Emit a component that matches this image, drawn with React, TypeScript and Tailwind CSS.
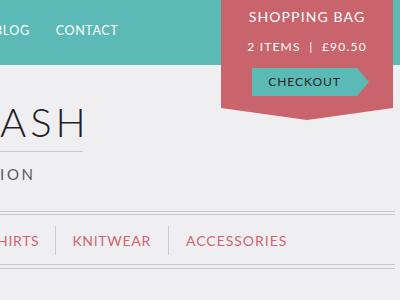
export default function App() {
  return (
    <div className="relative w-[400px] h-[300px] overflow-hidden bg-[#efeff1] font-['Lato','Open_Sans',sans-serif]">
      {/* Top bar */}
      <header className="h-[65px] bg-[#5bbab5] flex items-center">
        <nav className="flex items-center gap-[26px] -ml-[6px] text-white text-[12.5px] tracking-[0.05em] leading-none pb-[2px]">
          <span>BLOG</span>
          <span>CONTACT</span>
        </nav>
      </header>

      {/* Logo */}
      <div className="pt-[37px]">
        <div className="text-[40px] font-light leading-none tracking-[0.1em] text-[#1f1f1f]">ASH</div>
        <div className="mt-[9px] w-[83px] h-px bg-[#c9c9cb]" />
        <div className="mt-[15px] text-[15px] leading-none tracking-[0.18em] text-[#5a5a5c]">ION</div>
      </div>

      {/* Category menu */}
      <div className="mt-[29px] w-[395px]">
        <div className="h-px bg-[#cbcbcd]" />
        <div className="mt-[2px] h-px bg-[#cbcbcd]" />
        <div className="flex items-center h-[49px] pt-[2px] text-[14px] leading-none tracking-[0.05em] text-[#cf6470]">
          <span className="-ml-[3px]">HIRTS</span>
          <span className="mx-[16px] w-px h-[29px] bg-[#cbcbcd]" />
          <span>KNITWEAR</span>
          <span className="mx-[17px] w-px h-[29px] bg-[#cbcbcd]" />
          <span className="tracking-[0.07em]">ACCESSORIES</span>
        </div>
        <div className="h-px bg-[#cbcbcd]" />
        <div className="mt-[3px] h-px bg-[#cbcbcd]" />
      </div>

      {/* Shopping bag */}
      <div className="absolute top-0 left-[221px] w-[172px] h-[120px] bg-[#c9646c] [clip-path:polygon(0_0,100%_0,100%_108px,50%_120px,0_108px)] flex flex-col items-center text-white">
        <div className="mt-[10px] text-[14px] leading-none tracking-[0.08em]">SHOPPING BAG</div>
        <div className="mt-[17px] text-[12px] leading-none tracking-[0.1em] whitespace-pre">2 ITEMS  |  £90.50</div>
        <div className="mt-[15px] ml-[31px] self-start w-[117px] h-[28px] bg-[#5bbab5] [clip-path:polygon(0_0,105px_0,100%_50%,105px_100%,0_100%)] flex items-center justify-center pr-[12px] text-[12px] leading-none tracking-[0.08em] text-[#1c2626]">
          CHECKOUT
        </div>
      </div>
    </div>
  );
}
